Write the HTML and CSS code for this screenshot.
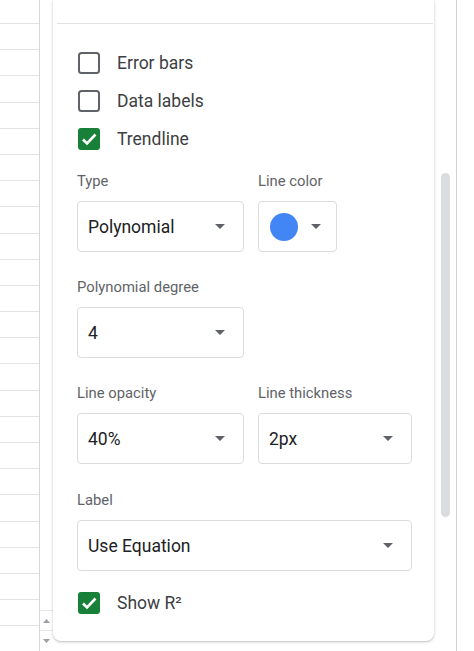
FILE: index.html
```html
<!DOCTYPE html>
<html lang="en">
<head>
<meta charset="utf-8">
<title>Chart editor - Trendline</title>
<link rel="stylesheet" href="styles.css">
</head>
<body>
<div class="app">
  <div class="sheet">
    <div class="sheet-head"></div>
    <div class="row"></div><div class="row"></div><div class="row"></div><div class="row"></div>
    <div class="row"></div><div class="row"></div><div class="row"></div><div class="row"></div>
    <div class="row"></div><div class="row"></div><div class="row"></div><div class="row"></div>
    <div class="row"></div><div class="row"></div><div class="row"></div><div class="row"></div>
    <div class="row"></div><div class="row"></div><div class="row"></div><div class="row"></div>
    <div class="row"></div><div class="row"></div><div class="row"></div><div class="row"></div>
  </div>
  <div class="gutter">
    <div class="sbtn"><svg width="7" height="4" viewBox="0 0 7 4"><polygon points="0,4 7,4 3.5,0" fill="#9aa0a6"/></svg></div>
    <div class="sbtn"><svg width="7" height="4" viewBox="0 0 7 4"><polygon points="0,0 7,0 3.5,4" fill="#9aa0a6"/></svg></div>
  </div>
  <div class="pane">
    <div class="card">
      <div class="divider"></div>
      <div class="content">
        <div class="checks">
          <div class="check">
            <svg class="cb" width="22" height="22" viewBox="0 0 22 22"><rect x="1" y="1" width="20" height="20" rx="2.5" fill="none" stroke="#5f6368" stroke-width="2"/></svg>
            <span>Error bars</span>
          </div>
          <div class="check">
            <svg class="cb" width="22" height="22" viewBox="0 0 22 22"><rect x="1" y="1" width="20" height="20" rx="2.5" fill="none" stroke="#5f6368" stroke-width="2"/></svg>
            <span>Data labels</span>
          </div>
          <div class="check">
            <svg class="cb" width="22" height="22" viewBox="0 0 22 22"><rect x="0" y="0" width="22" height="22" rx="3" fill="#188038"/><polyline points="5,11.5 9,15.5 17.5,6.5" fill="none" stroke="#fff" stroke-width="2.6"/></svg>
            <span>Trendline</span>
          </div>
        </div>

        <div class="fields">
          <div class="field">
            <div class="label">Type</div>
            <div class="select w1"><span>Polynomial</span><svg class="arrow" width="10" height="5" viewBox="0 0 10 5"><polygon points="0,0 10,0 5,5" fill="#5f6368"/></svg></div>
          </div>
          <div class="field">
            <div class="label">Line color</div>
            <div class="select color"><span class="swatch"></span><svg class="arrow" width="10" height="5" viewBox="0 0 10 5"><polygon points="0,0 10,0 5,5" fill="#5f6368"/></svg></div>
          </div>
        </div>

        <div class="fields">
          <div class="field">
            <div class="label">Polynomial degree</div>
            <div class="select w1"><span>4</span><svg class="arrow" width="10" height="5" viewBox="0 0 10 5"><polygon points="0,0 10,0 5,5" fill="#5f6368"/></svg></div>
          </div>
        </div>

        <div class="fields">
          <div class="field">
            <div class="label">Line opacity</div>
            <div class="select w1"><span>40%</span><svg class="arrow" width="10" height="5" viewBox="0 0 10 5"><polygon points="0,0 10,0 5,5" fill="#5f6368"/></svg></div>
          </div>
          <div class="field">
            <div class="label">Line thickness</div>
            <div class="select w2"><span>2px</span><svg class="arrow" width="10" height="5" viewBox="0 0 10 5"><polygon points="0,0 10,0 5,5" fill="#5f6368"/></svg></div>
          </div>
        </div>

        <div class="fields last">
          <div class="field wide">
            <div class="label">Label</div>
            <div class="select full"><span>Use Equation</span><svg class="arrow" width="10" height="5" viewBox="0 0 10 5"><polygon points="0,0 10,0 5,5" fill="#5f6368"/></svg></div>
          </div>
        </div>

        <div class="check r2">
          <svg class="cb" width="22" height="22" viewBox="0 0 22 22"><rect x="0" y="0" width="22" height="22" rx="3" fill="#188038"/><polyline points="5,11.5 9,15.5 17.5,6.5" fill="none" stroke="#fff" stroke-width="2.6"/></svg>
          <span>Show R²</span>
        </div>
      </div>
    </div>
    <div class="track"><div class="thumb"></div></div>
  </div>
  <div class="edge"></div>
</div>
</body>
</html>
```

FILE: styles.css
```css
* { box-sizing: border-box; }
html, body {
  margin: 0;
  padding: 0;
  background: #ffffff;
}
body {
  font-family: Roboto, "Liberation Sans", Arial, sans-serif;
  color: #3c4043;
}
.app {
  display: flex;
  width: 474px;
  height: 651px;
  overflow: hidden;
  background: #ffffff;
}

/* spreadsheet grid on the left */
.sheet {
  width: 40px;
  flex: none;
  border-right: 1px solid #d6d6d6;
  display: flex;
  flex-direction: column;
}
.sheet-head {
  height: 24px;
  flex: none;
  border-bottom: 1px solid #e3e3e3;
}
.row {
  height: 26.2px;
  flex: none;
  border-bottom: 1px solid #e3e3e3;
}

.gutter {
  width: 13px;
  flex: none;
  display: flex;
  flex-direction: column;
  justify-content: flex-end;
}
.sbtn {
  height: 20px;
  flex: none;
  display: flex;
  align-items: center;
  justify-content: center;
  border-top: 1px solid #e8e8e8;
}
.sbtn:last-child { height: 21px; }

/* side panel */
.pane {
  width: 404px;
  flex: none;
  display: flex;
  align-items: flex-start;
  border-right: 1px solid #d2d2d2;
}
.card {
  width: 381px;
  height: 641px;
  flex: none;
  background: #ffffff;
  border-radius: 0 0 8px 8px;
  box-shadow: 0 1px 3px rgba(60, 64, 67, 0.28), 0 1px 1px rgba(60, 64, 67, 0.08);
  padding-top: 23px;
}
.divider {
  height: 1px;
  margin: 0 1px 0 4px;
  background: #e2e2e2;
}
.content {
  padding: 0 22px 0 24px;
}
.checks {
  margin-top: 20px;
  display: flex;
  flex-direction: column;
}
.check {
  height: 38px;
  display: flex;
  align-items: center;
  gap: 17px;
  font-size: 17.5px;
  color: #3c4043;
}
.cb {
  flex: none;
  margin-left: 1px;
  display: block;
}

.fields {
  display: flex;
  gap: 14px;
  margin-top: 13px;
}
.fields + .fields { margin-top: 25px; }
.fields.last { margin-top: 26px; }
.field {
  display: flex;
  flex-direction: column;
}
.label {
  font-size: 14.8px;
  line-height: 20px;
  color: #5f6368;
  margin-bottom: 10px;
}
.select {
  height: 51px;
  border: 1px solid #dadce0;
  border-radius: 4px;
  display: flex;
  align-items: center;
  justify-content: space-between;
  padding: 0 18px 0 10px;
  font-size: 17.5px;
  color: #202124;
  background: #ffffff;
}
.select.w1 { width: 167px; }
.select.w2 { width: 154px; }
.select.full { width: 335px; }
.select.color {
  width: 79px;
  padding: 0 15px 0 11px;
}
.swatch {
  width: 28px;
  height: 28px;
  border-radius: 50%;
  background: #4285f4;
  flex: none;
}
.arrow {
  flex: none;
  display: block;
}
.check.r2 { margin-top: 13px; }

/* vertical scrollbar */
.track {
  margin-left: 7px;
  width: 10px;
  padding-top: 173px;
}
.thumb {
  width: 9px;
  height: 344px;
  border-radius: 5px;
  background: #dadce0;
}

.edge {
  flex: 1;
}
```
